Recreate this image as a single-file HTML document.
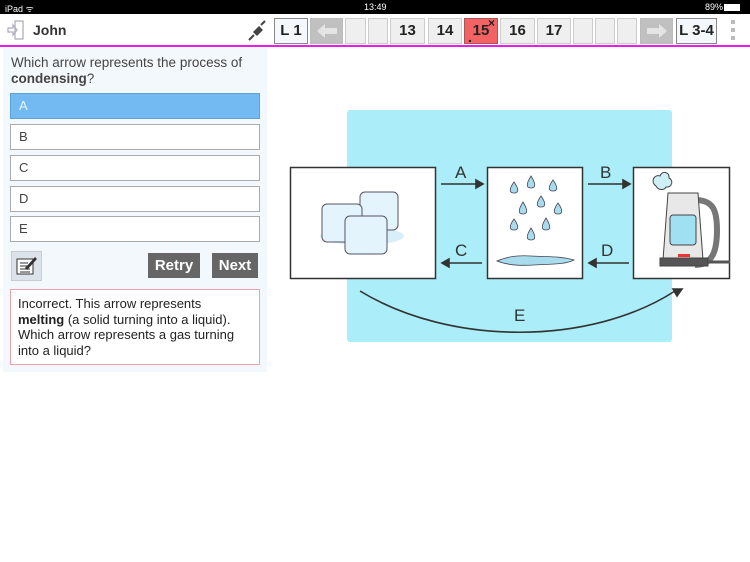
<!DOCTYPE html>
<html><head><meta charset="utf-8"><style>
*{box-sizing:border-box;margin:0;padding:0}
body{width:750px;height:562px;background:#fff;font-family:"Liberation Sans",sans-serif;position:relative;overflow:hidden}
.a{position:absolute}
.nb{position:absolute;top:18px;height:26px;border:1px solid #ccc;background:#efefef;font-weight:bold;font-size:15px;color:#222;text-align:center;line-height:24px}
.opt{position:absolute;left:10px;width:250px;height:26px;border:1px solid #aaa;background:#fff;font-size:13px;color:#444;padding-left:8px;line-height:24px}
.btn{position:absolute;top:253px;height:25px;background:#666;color:#fff;font-weight:bold;font-size:15px;text-align:center;line-height:25px}
</style></head><body>
<div class="a" style="left:0;top:0;width:750px;height:14px;background:#000;color:#fff;font-size:9px">
<span class="a" style="left:5px;top:2px">iPad ᯤ</span>
<span class="a" style="left:364px;top:2px">13:49</span>
<span class="a" style="left:705px;top:2px">89%</span>
<span class="a" style="left:724px;top:4px;width:16px;height:7px;background:#fff;border:1px solid #fff"></span>
</div>
<div class="a" style="left:0;top:45px;width:750px;height:2px;background:#e81ee8"></div>
<svg class="a" style="left:6px;top:19px" width="22" height="22" viewBox="0 0 22 22" fill="none" stroke="#aab" stroke-width="1.2"><rect x="9" y="2" width="8" height="18"/><path d="M2 9h5v-3l4 5-4 5v-3H2z"/></svg>
<div class="a" style="left:33px;top:22px;font-weight:bold;font-size:14px;color:#333">John</div>
<svg class="a" style="left:245px;top:19px" width="24" height="24" viewBox="0 0 24 24"><path d="M4 21l5-5" stroke="#444" stroke-width="2"/><path d="M8 13l6-6 4 4-6 6z" fill="#444"/><path d="M16 6l4-4" stroke="#444" stroke-width="2"/></svg>
<div class="nb" style="left:274px;width:34px;background:#f4f8fc;border-color:#888">L 1</div>
<div class="nb" style="left:310px;width:33px;background:#c0c0c0;border-color:#bbb"><svg width="22" height="16" viewBox="0 0 22 16" style="margin-top:4px"><path d="M1 8l8-7v4h12v6H9v4z" fill="#e4e4e4"/></svg></div>
<div class="nb" style="left:345px;width:21px"></div>
<div class="nb" style="left:368px;width:20px"></div>
<div class="nb" style="left:390px;width:35px">13</div>
<div class="nb" style="left:428px;width:34px">14</div>
<div class="nb" style="left:464px;width:34px;background:#f36363;border-color:#a55">15<span class="a" style="right:2px;top:-8px;font-size:12px">×</span><span class="a" style="left:3px;top:6px;font-size:14px">.</span></div>
<div class="nb" style="left:500px;width:35px">16</div>
<div class="nb" style="left:537px;width:34px">17</div>
<div class="nb" style="left:573px;width:20px"></div>
<div class="nb" style="left:595px;width:20px"></div>
<div class="nb" style="left:617px;width:20px"></div>
<div class="nb" style="left:640px;width:33px;background:#c0c0c0;border-color:#bbb"><svg width="22" height="16" viewBox="0 0 22 16" style="margin-top:4px"><path d="M21 8l-8-7v4H1v6h12v4z" fill="#e4e4e4"/></svg></div>
<div class="nb" style="left:676px;width:41px;background:#f4f8fc;border-color:#888">L 3-4</div>
<div class="a" style="left:731px;top:20px;width:4px;height:22px;background:repeating-linear-gradient(#bbb 0 4px,transparent 4px 8px)"></div>

<div class="a" style="left:3px;top:48px;width:264px;height:324px;background:#f3f8fc"></div>
<div class="a" style="left:11px;top:55px;font-size:13.5px;color:#444;line-height:16px">Which arrow represents the process of<br><b>condensing</b>?</div>
<div class="opt" style="top:93px;background:#74baf2;border-color:#5ea2d8;color:#e8f4ff">A</div>
<div class="opt" style="top:124px">B</div>
<div class="opt" style="top:155px">C</div>
<div class="opt" style="top:186px">D</div>
<div class="opt" style="top:216px">E</div>
<div class="a" style="left:11px;top:251px;width:31px;height:30px;background:#dde3ea;border:1px solid #c8ccd2"><svg width="29" height="28" viewBox="0 0 29 28"><rect x="5" y="7" width="16" height="15" fill="#fff" stroke="#333"/><path d="M8 11h8M8 14h10M8 17h10M8 20h10" stroke="#333"/><path d="M13 16l10-11 2 2-10 11z" fill="#333"/></svg></div>
<div class="btn" style="left:148px;width:52px">Retry</div>
<div class="btn" style="left:212px;width:46px">Next</div>
<div class="a" style="left:10px;top:289px;width:250px;height:76px;background:#fff;border:1px solid #f0a0a8;padding:6px 0 0 7px;font-size:13px;color:#222;line-height:15.5px">Incorrect. This arrow represents<br><b>melting</b> (a solid turning into a liquid).<br>Which arrow represents a gas turning<br>into a liquid?</div>

<svg class="a" style="left:0;top:0" width="750" height="562" font-family="Liberation Sans" font-size="17" fill="#333">
<rect x="347" y="110" width="325" height="232" rx="3" fill="#abedf9"/>
<rect x="290.5" y="167.5" width="145" height="111" fill="#fff" stroke="#333" stroke-width="1.5"/>
<rect x="487.5" y="167.5" width="95" height="111" fill="#fff" stroke="#333" stroke-width="1.5"/>
<rect x="633.5" y="167.5" width="96" height="111" fill="#fff" stroke="#333" stroke-width="1.5"/>
<ellipse cx="362" cy="236" rx="42" ry="9" fill="#d8eef8"/>
<g fill="#e4f4fc" stroke="#556" stroke-width="1"><rect x="360" y="192" width="38" height="38" rx="5"/><rect x="322" y="204" width="40" height="38" rx="5"/><rect x="345" y="216" width="42" height="38" rx="5"/></g>
<g fill="#a8dcec" stroke="#445" stroke-width="0.8">
<path d="M514 182c-5 7-5 11 0 11s5-4 0-11z"/><path d="M531 176c-5 8-5 12 0 12s5-4 0-12z"/><path d="M553 180c-5 7-5 11 0 11s5-4 0-11z"/><path d="M541 196c-5 7-5 11 0 11s5-4 0-11z"/><path d="M523 202c-5 8-5 12 0 12s5-4 0-12z"/><path d="M558 203c-5 7-5 11 0 11s5-4 0-11z"/><path d="M514 219c-5 7-5 11 0 11s5-4 0-11z"/><path d="M546 218c-5 8-5 12 0 12s5-4 0-12z"/><path d="M531 228c-5 8-5 12 0 12s5-4 0-12z"/>
<path d="M497 261c10-4 18-6 34-5s30 0 43 4c-10 5-25 4-40 5s-27 0-37-4z"/></g>
<g stroke="#444" stroke-width="1"><path d="M670 200h25c18 0 22 10 22 30s-4 35-22 35" fill="none" stroke="#777" stroke-width="6"/><path d="M668 193h30l5 67h-40z" fill="#e8e8e8"/><rect x="670" y="215" width="26" height="30" rx="3" fill="#9fe1f2"/><rect x="660" y="258" width="48" height="8" fill="#555"/><rect x="678" y="254" width="12" height="3" fill="#e33" stroke="none"/><path d="M708 262h22" stroke="#555" stroke-width="3"/><path d="M656 186c-6-4-2-12 4-10 2-6 10-4 9 2 5 2 3 10-3 9-2 4-8 3-10-1z" fill="#cfeff7"/></g>
<g stroke="#333" stroke-width="1.6" fill="#333"><path d="M441 184h36"/><path d="M483 184l-7-4v8z"/><path d="M588 184h36"/><path d="M630 184l-7-4v8z"/><path d="M448 263h34"/><path d="M442 263l7-4v8z"/><path d="M595 263h34"/><path d="M589 263l7-4v8z"/><path d="M360 291c90 55 230 55 315 0" fill="none"/><path d="M682 289l-9 0 4 7z"/></g>
<text x="455" y="178">A</text><text x="600" y="178">B</text><text x="455" y="256">C</text><text x="601" y="256">D</text><text x="514" y="321">E</text>
</svg>
</body></html>
